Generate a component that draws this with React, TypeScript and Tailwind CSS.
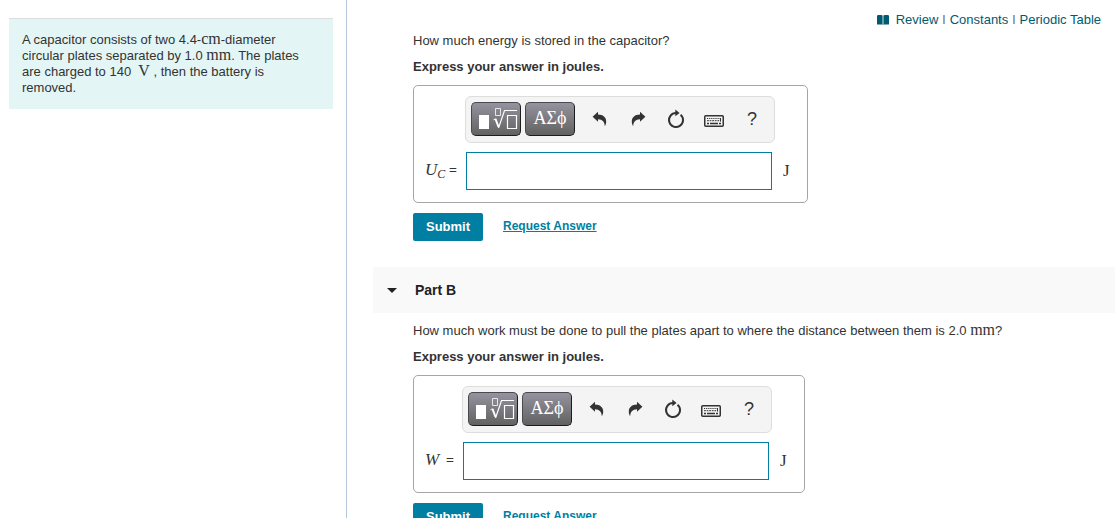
import React from 'react';

const TOOL_BUTTON =
  'flex h-[34px] w-[50px] items-center justify-center rounded-[5px] border border-t-[#4a4a4e] border-l-[#4a4a4e] border-r-[#1c1c1c] border-b-[#1c1c1c] bg-linear-to-b from-[#95939f] to-[#626262] text-white';
const ICON_BUTTON = 'flex h-[34px] w-[38px] items-center justify-center text-[#333333]';

function Unit({ children }: { children: React.ReactNode }) {
  return <span className="font-['Liberation_Serif',serif] text-[16px] leading-3">{children}</span>;
}

function BookIcon() {
  return (
    <svg width="12" height="10" viewBox="0 0 12 10" fill="#005a70" aria-hidden="true">
      <path d="M0 .4C2 0 4 0 5.6 .6V9.8C4 9.3 2 9.3 0 9.6ZM12 .4C10 0 8 0 6.4 .6V9.8C8 9.3 10 9.3 12 9.6Z" />
    </svg>
  );
}

function TemplateIcon() {
  return (
    <svg width="48" height="32" viewBox="1 1 48 32" fill="none" stroke="#fff" aria-hidden="true">
      <path d="M8 13h10v14H8z" fill="#fff" stroke="none" />
      <path d="M24.5 6.5h5v7h-5z" strokeOpacity=".8" />
      <path d="M22.5 17.8l2-1" />
      <path d="M24.5 16.8l3 8" strokeWidth="1.9" />
      <path d="M27.5 26L33.5 8.5H46" strokeWidth="1.2" />
      <path d="M36.5 13.5h9v13h-9z" strokeWidth="1.2" />
    </svg>
  );
}

function ArrowIcon({ flip = false }: { flip?: boolean }) {
  return (
    <svg width="16" height="16" viewBox="0 0 16 16" fill="currentColor" aria-hidden="true">
      <path
        transform={flip ? 'matrix(-1 0 0 1 16 0)' : undefined}
        d="M.6 5.8L6 .8V3.6C11 3.6 14.2 6.4 14.2 10.4C14.2 12.4 13.6 14 12.8 15.2C12.8 11 10.6 8.3 6 8.2V10.8Z"
      />
    </svg>
  );
}

function ResetIcon() {
  return (
    <svg width="20" height="20" viewBox="0 0 20 20" fill="none" aria-hidden="true">
      <path d="M10 4A7 7 0 1 0 14.6 5.7" stroke="currentColor" strokeWidth="2" />
      <path d="M9.3.6L13.6 3.9L9.3 7.2Z" fill="currentColor" />
    </svg>
  );
}

function KeyboardIcon() {
  return (
    <svg width="20" height="12" viewBox="0 0 20 12" fill="none" stroke="currentColor" aria-hidden="true">
      <rect x=".75" y=".75" width="18.5" height="10.5" rx="1" strokeWidth="1.5" />
      <path d="M3 3.5H17" strokeDasharray="1.2 .9" />
      <path d="M3 5.7H17" strokeDasharray="1.8 .8" />
      <path d="M3 8.5H5M6 8.5H14M15 8.5H17" strokeWidth="1.3" />
      <path d="M16.5 3V6.5" />
    </svg>
  );
}

function Toolbar() {
  return (
    <div className="flex h-[47px] items-start rounded-md border border-[#dddddd] bg-[#f4f4f4] pt-[5px] pl-[5px]">
      <div className="mr-[6px] flex gap-1">
        <button type="button" aria-label="Templates" className={TOOL_BUTTON}>
          <TemplateIcon />
        </button>
        <button type="button" className={`${TOOL_BUTTON} pb-[3px] font-['Liberation_Serif',serif] text-[18px] leading-none`}>
          ΑΣϕ
        </button>
      </div>
      <button type="button" aria-label="Undo" className={ICON_BUTTON}>
        <ArrowIcon />
      </button>
      <button type="button" aria-label="Redo" className={ICON_BUTTON}>
        <ArrowIcon flip />
      </button>
      <button type="button" aria-label="Reset" className={ICON_BUTTON}>
        <ResetIcon />
      </button>
      <button type="button" aria-label="Keyboard shortcuts" className={`${ICON_BUTTON} pt-1`}>
        <KeyboardIcon />
      </button>
      <button type="button" className={`${ICON_BUTTON} text-[18px]`}>
        ?
      </button>
    </div>
  );
}

type AnswerProps = {
  id: string;
  label: React.ReactNode;
  columns: string;
  question: React.ReactNode;
};

function Answer({ id, label, columns, question }: AnswerProps) {
  return (
    <form className="pl-[66px]" onSubmit={(e) => e.preventDefault()}>
      <p className="leading-4">{question}</p>
      <p className="mt-[10px] leading-4 font-bold">Express your answer in joules.</p>
      <div className={`mt-[10px] inline-grid ${columns} gap-y-[9px] rounded-[5px] border border-[#a6a6a6] pt-[10px] pr-[17px] pb-3 pl-[11px] align-top`}>
        <div className="col-start-2">
          <Toolbar />
        </div>
        <label
          htmlFor={id}
          className="col-start-1 flex items-baseline justify-between self-center pr-2 pb-[2px] whitespace-nowrap font-['Liberation_Serif',serif] text-[17px] leading-6"
        >
          <i>{label}</i>
          <span className="text-[14px] font-bold">=</span>
        </label>
        <input id={id} type="text" className="ml-px h-[38px] w-[306px] border border-[#007fa3] bg-white px-2 text-base outline-none" />
        <span className="self-center pl-2 font-['Liberation_Serif',serif] text-[17px] leading-6">J</span>
      </div>
      <div className="mt-[10px] flex items-center gap-5">
        <button type="submit" className="h-7 w-[70px] rounded-[2px] bg-[#007fa3] text-[13px] font-bold text-white">
          Submit
        </button>
        <a href="#" className="pb-[2px] text-xs font-bold text-[#007fa3] underline">
          Request Answer
        </a>
      </div>
    </form>
  );
}

export default function App() {
  return (
    <div className="flex h-screen overflow-hidden bg-white font-['Liberation_Sans',Arial,sans-serif] text-[13px] text-[#333333]">
      <aside className="w-[347px] shrink-0 border-r border-[#b5c7dc] pt-[18px] pr-[13px] pl-[9px]">
        <p className="border-t border-[#dcdcdc] bg-[#e3f6f5] p-[13px] leading-4">
          A capacitor consists of two 4.4-<Unit>cm</Unit>-diameter circular plates separated by 1.0 <Unit>mm</Unit>. The plates
          are charged to 140 &nbsp;<Unit>V</Unit> , then the battery is removed.
        </p>
      </aside>
      <main className="min-w-0 flex-1">
        <nav className="flex items-center justify-end gap-1 pt-3 pr-[14px] leading-4 text-[#005a70]">
          <span className="mr-[3px]">
            <BookIcon />
          </span>
          <a href="#">Review</a>
          <span className="text-xs text-[#666666]">I</span>
          <a href="#">Constants</a>
          <span className="text-xs text-[#666666]">I</span>
          <a href="#">Periodic Table</a>
        </nav>
        <section className="pt-[5px]">
          <Answer
            id="energy"
            columns="grid-cols-[40px_310px_auto]"
            question="How much energy is stored in the capacitor?"
            label={
              <>
                U<sub className="bottom-[-3px] text-xs">C</sub>
              </>
            }
          />
        </section>
        <section className="mt-[26px] pl-[26px]">
          <h2 className="bg-[#f9f9f9]">
            <button type="button" className="flex h-[46px] items-center gap-[18px] pl-[14px] text-sm font-bold text-[#222222]">
              <svg width="10" height="5" viewBox="0 0 10 5" fill="currentColor" aria-hidden="true">
                <path d="M0 0H10L5 5Z" />
              </svg>
              Part B
            </button>
          </h2>
        </section>
        <section className="pt-[10px]">
          <Answer
            id="work"
            columns="grid-cols-[37px_310px_auto]"
            question={
              <>
                How much work must be done to pull the plates apart to where the distance between them is 2.0 <Unit>mm</Unit>?
              </>
            }
            label="W"
          />
        </section>
      </main>
    </div>
  );
}
